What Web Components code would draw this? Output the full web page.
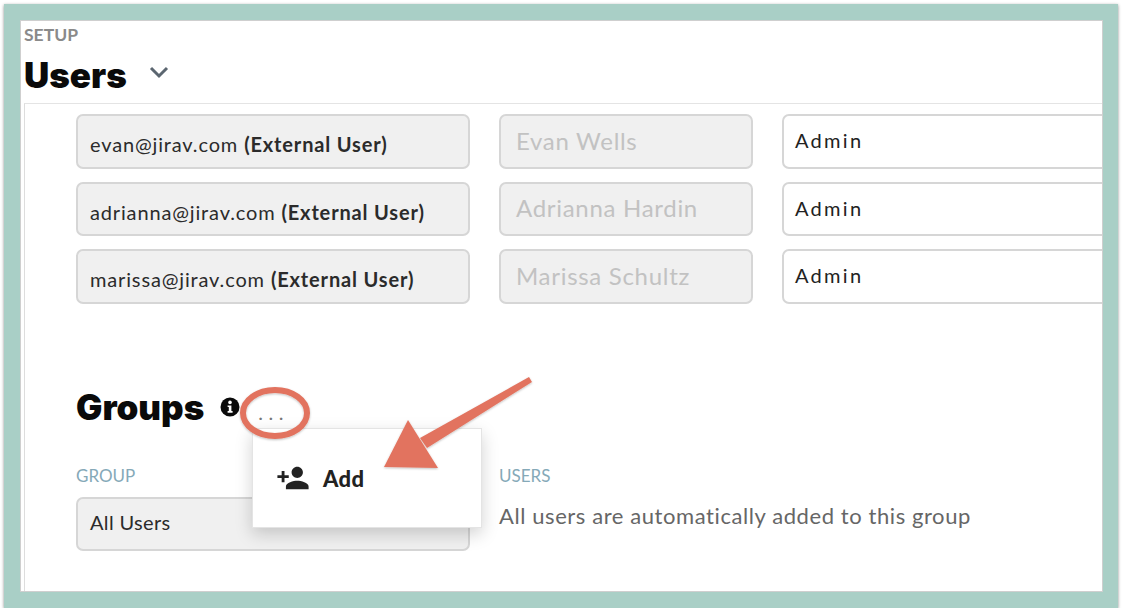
<!DOCTYPE html>
<html>
<head>
<meta charset="utf-8">
<style>
  html, body { margin: 0; background: #fff; font-family: Lato, "Open Sans", sans-serif; overflow: hidden; }
</style>
</head>
<body>
<screen-frame>
  <page-header section="SETUP" title="Users"></page-header>
  <page-body>
    <user-row>
      <text-field kind="readonly">evan@jirav.com <b>(External User)</b></text-field>
      <text-field kind="muted">Evan Wells</text-field>
      <text-field kind="select">Admin</text-field>
    </user-row>
    <user-row>
      <text-field kind="readonly">adrianna@jirav.com <b>(External User)</b></text-field>
      <text-field kind="muted">Adrianna Hardin</text-field>
      <text-field kind="select">Admin</text-field>
    </user-row>
    <user-row>
      <text-field kind="readonly">marissa@jirav.com <b>(External User)</b></text-field>
      <text-field kind="muted">Marissa Schultz</text-field>
      <text-field kind="select">Admin</text-field>
    </user-row>
    <groups-section>
      <text-field kind="group" slot="group">All Users</text-field>
      All users are automatically added to this group
    </groups-section>
  </page-body>
  <add-menu></add-menu>
  <callout-marks></callout-marks>
</screen-frame>

<script>
class ScreenFrame extends HTMLElement {
  connectedCallback() {
    this.attachShadow({ mode: 'open' }).innerHTML = `
      <style>
        :host {
          display: block;
          box-sizing: border-box;
          position: relative;
          width: 1114px;
          height: 604px;
          margin: 4px 0 0 4px;
          border: 16px solid #a9cfc6;
          border-right-width: 15px;
          background: #fff;
          box-shadow: 0 1px 3px rgba(0,0,0,.45);
        }
        :host::after {
          content: '';
          position: absolute;
          inset: 0;
          border: 1px solid #cfcfcf;
          pointer-events: none;
        }
        .clip { height: 100%; overflow: hidden; display: flex; flex-direction: column; }
      </style>
      <div class="clip"><slot></slot></div>`;
  }
}

class PageHeader extends HTMLElement {
  connectedCallback() {
    this.attachShadow({ mode: 'open' }).innerHTML = `
      <style>
        :host { display: block; height: 83px; padding-left: 4px; box-sizing: border-box; flex: none; }
        .section { font-size: 17.5px; line-height: 22px; padding-top: 4px; color: #8a8a8a; font-weight: 700; }
        .title { display: flex; align-items: center; height: 48px; margin-top: 5px; }
        h1 { margin: 0; font-family: Inter, Lato, sans-serif; font-size: 35px; line-height: 48px; font-weight: 900; color: #0a0a0a; }
        svg { margin-left: 22px; margin-top: -5px; }
      </style>
      <div class="section">${this.getAttribute('section')}</div>
      <div class="title">
        <h1>${this.getAttribute('title')}</h1>
        <svg width="20" height="13" viewBox="0 0 20 13"><path d="M2 2l8 8 8-8" fill="none" stroke="#5b6670" stroke-width="3"/></svg>
      </div>`;
  }
}

class PageBody extends HTMLElement {
  connectedCallback() {
    this.attachShadow({ mode: 'open' }).innerHTML = `
      <style>
        :host {
          display: flex;
          flex-direction: column;
          gap: 13px;
          flex: 1;
          margin-left: 4px;
          padding: 10px 0 0 51px;
          border-left: 1px solid #ddd;
          border-top: 1px solid #e4e4e4;
        }
      </style>
      <slot></slot>`;
  }
}

class UserRow extends HTMLElement {
  connectedCallback() {
    this.attachShadow({ mode: 'open' }).innerHTML = `
      <style>
        :host { display: grid; grid-template-columns: 394px 254px 400px; column-gap: 29px; }
      </style>
      <slot></slot>`;
  }
}

class TextField extends HTMLElement {
  connectedCallback() {
    this.attachShadow({ mode: 'open' }).innerHTML = `
      <style>
        :host {
          display: flex;
          align-items: center;
          box-sizing: border-box;
          height: 54.5px;
          padding: 6px 12px 0;
          border: 2px solid #d6d6d6;
          border-radius: 7px;
          background: #f0f0f0;
          color: #2b2b2b;
          font-size: 20px;
          letter-spacing: .85px;
          white-space: pre;
        }
        :host([kind="muted"]) { color: #c2c2c2; font-size: 24px; letter-spacing: .7px; padding: 0 15px 2px; }
        :host([kind="select"]) { background: #fff; color: #222; letter-spacing: 2.3px; padding: 0 11px 2px; }
        :host([kind="group"]) { letter-spacing: .35px; padding: 0 12px 4px; }
        ::slotted(b) { font-weight: 700; letter-spacing: .85px; }
      </style>
      <slot></slot>`;
  }
}

class GroupsSection extends HTMLElement {
  connectedCallback() {
    this.attachShadow({ mode: 'open' }).innerHTML = `
      <style>
        :host { display: block; margin-top: 70px; }
        .head { display: flex; align-items: center; height: 40px; }
        h2 { margin: 0; font-family: Inter, Lato, sans-serif; font-size: 35px; font-weight: 900; color: #0a0a0a; }
        svg { margin-left: 16px; }
        .dots { margin-left: 18px; margin-top: 10px; font-size: 20px; letter-spacing: 5.5px; color: #777; }
        .grid { display: grid; grid-template-columns: 394px 500px; column-gap: 29px; row-gap: 11px; margin-top: 39px; }
        .label { font-size: 17px; line-height: 20px; color: #85a9b8; }
        .note { color: #666; font-size: 22px; letter-spacing: .58px; line-height: 38px; }
      </style>
      <div class="head">
        <h2>Groups</h2>
        <svg width="20" height="20" viewBox="0 0 20 20">
          <circle cx="10" cy="10" r="9.5" fill="#0a0a0a"/>
          <circle cx="10" cy="5.4" r="1.8" fill="#fff"/>
          <path d="M7.6 8.4h3.8v5.6h1.2v1.7H7.6V14h1.2v-3.9H7.6z" fill="#fff"/>
        </svg>
        <span class="dots">...</span>
      </div>
      <div class="grid">
        <div class="label">GROUP</div>
        <div class="label">USERS</div>
        <slot name="group"></slot>
        <div class="note"><slot></slot></div>
      </div>`;
  }
}

class AddMenu extends HTMLElement {
  connectedCallback() {
    this.attachShadow({ mode: 'open' }).innerHTML = `
      <style>
        :host {
          position: absolute;
          left: 232px;
          top: 408px;
          width: 230px;
          height: 100px;
          box-sizing: border-box;
          display: flex;
          align-items: center;
          gap: 13px;
          padding: 0 0 0 23px;
          background: #fff;
          border: 1px solid #e4e4e4;
          box-shadow: 0 6px 16px rgba(0,0,0,.18);
          color: #222;
          font-size: 22px;
          font-weight: 900;
          letter-spacing: .4px;
        }
        svg { display: block; flex: none; }
      </style>
      <svg width="34" height="34" viewBox="0 0 24 24" fill="#222"><path d="M15 12c2.21 0 4-1.79 4-4s-1.79-4-4-4-4 1.79-4 4 1.79 4 4 4zm-9-2V7H4v3H1v2h3v3h2v-3h3v-2H6zm9 4c-2.67 0-8 1.34-8 4v2h16v-2c0-2.66-5.33-4-8-4z"/></svg>
      <span>Add</span>`;
  }
}

class CalloutMarks extends HTMLElement {
  connectedCallback() {
    // drawn in page coordinates, the frame's padding box starts at 20,20
    this.attachShadow({ mode: 'open' }).innerHTML = `
      <style>
        :host { position: absolute; left: 0; top: 0; width: 1083px; height: 572px; pointer-events: none; }
        svg { display: block; }
      </style>
      <svg width="1083" height="572" viewBox="20 20 1083 572">
        <defs><filter id="s" x="-10%" y="-10%" width="120%" height="130%"><feDropShadow dx="0" dy="1" stdDeviation="1" flood-color="#000" flood-opacity=".25"/></filter></defs>
        <g filter="url(#s)" fill="#e2735f">
          <ellipse cx="275" cy="413" rx="32" ry="23" fill="none" stroke="#e2735f" stroke-width="6"/>
          <polygon points="529,377 532,382 427,448 420,438"/>
          <polygon points="408,420 384,467 438,468"/>
        </g>
      </svg>`;
  }
}

customElements.define('screen-frame', ScreenFrame);
customElements.define('page-header', PageHeader);
customElements.define('page-body', PageBody);
customElements.define('user-row', UserRow);
customElements.define('text-field', TextField);
customElements.define('groups-section', GroupsSection);
customElements.define('add-menu', AddMenu);
customElements.define('callout-marks', CalloutMarks);
</script>
</body>
</html>
